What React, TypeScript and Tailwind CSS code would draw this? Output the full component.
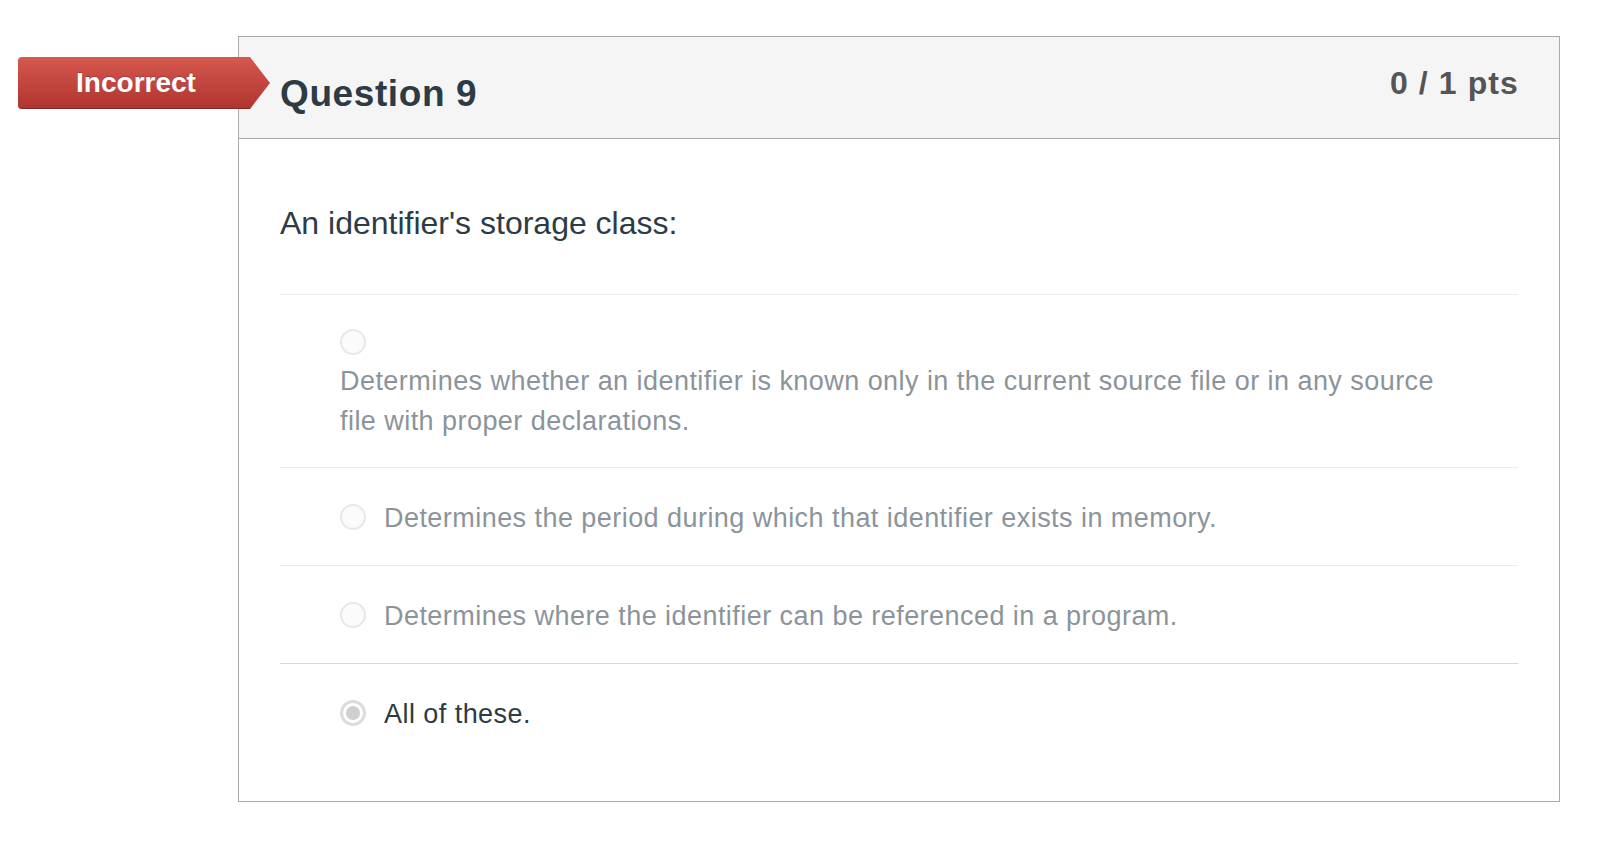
import React from 'react';

type Answer = { text: string; selected?: boolean };

const answers: Answer[] = [
  { text: 'Determines whether an identifier is known only in the current source file or in any source file with proper declarations.' },
  { text: 'Determines the period during which that identifier exists in memory.' },
  { text: 'Determines where the identifier can be referenced in a program.' },
  { text: 'All of these.', selected: true },
];

function Radio({ selected }: { selected?: boolean }) {
  if (selected) {
    return (
      <span className="flex items-center justify-center w-[26px] h-[26px] shrink-0 rounded-full border-[3px] border-[#dcdcdc] bg-white">
        <span className="w-[14px] h-[14px] rounded-full bg-[#cfcfcf]" />
      </span>
    );
  }
  return <span className="block w-[26px] h-[26px] shrink-0 rounded-full border-2 border-[#e8e8e8] bg-[#fbfbfb]" />;
}

export default function App() {
  return (
    <div className="relative min-h-screen bg-white font-['Liberation_Sans',Arial,sans-serif] pt-[36px] pb-[40px]">
      {/* result flag */}
      <div className="absolute left-[18px] top-[57px] z-10 w-[252px] h-[52px] rounded-l-[4px] bg-gradient-to-b from-[#d6584f] to-[#ae342d] shadow-[inset_0_-1px_0_rgba(0,0,0,0.25)] [clip-path:polygon(0_0,232px_0,100%_50%,232px_100%,0_100%)]">
        <div className="w-[232px] h-full flex items-center justify-center pl-[4px] text-white font-bold text-[28px] leading-none [text-shadow:0_-1px_0_rgba(0,0,0,0.2)]">
          Incorrect
        </div>
      </div>

      <div className="ml-[238px] w-[1322px] border border-[#aaaaaa] bg-white">
        <div className="flex justify-between items-start bg-[#f5f5f5] border-b border-[#aaaaaa] pl-[41px] pr-[40px] pt-[30px] pb-[26px]">
          <h2 className="mt-[8px] text-[37px] font-bold leading-none tracking-[0.6px] text-[#2d3b45]">Question 9</h2>
          <div className="text-[32px] font-bold leading-none tracking-[1.1px] text-[#555555]">0 / 1 pts</div>
        </div>

        <div className="px-[41px] pt-[60px] pb-[40px]">
          <p className="text-[32px] leading-[48px] text-[#2d3b45] mb-[47px]">An identifier's storage class:</p>

          <div>
            {answers.map((a, i) => {
              const color = a.selected ? 'text-[#2d3b45]' : 'text-[#8b949a]';
              const border = i === 3 ? 'border-[#d8d8d8]' : 'border-[#ececec]';
              if (i === 0) {
                return (
                  <div key={i} className={`border-t ${border} pl-[60px] pr-[60px] pt-[34px] pb-[26px]`}>
                    <Radio selected={a.selected} />
                    <div className={`mt-[6px] text-[27px] leading-[40px] tracking-[0.45px] ${color}`}>{a.text}</div>
                  </div>
                );
              }
              return (
                <div key={i} className={`flex items-center border-t ${border} pl-[60px] pr-[60px] pt-[30px] pb-[27px]`}>
                  <span className="mb-[2px] mr-[18px]">
                    <Radio selected={a.selected} />
                  </span>
                  <span className={`text-[27px] leading-[40px] tracking-[0.45px] ${color}`}>{a.text}</span>
                </div>
              );
            })}
          </div>
        </div>
      </div>
    </div>
  );
}
